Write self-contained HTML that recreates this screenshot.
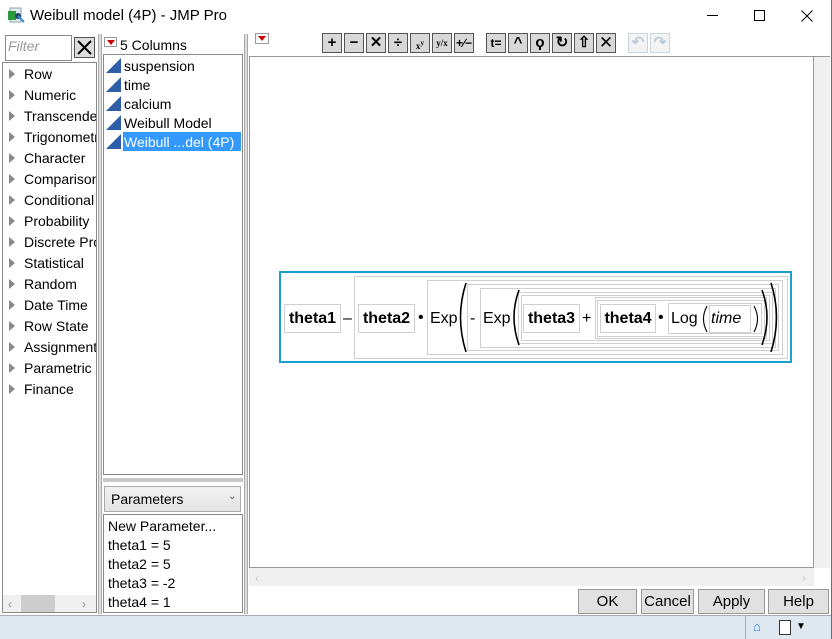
<!DOCTYPE html>
<html><head><meta charset="utf-8"><style>
*{box-sizing:border-box;margin:0;padding:0}
body{width:832px;height:639px;overflow:hidden;background:#fff;font-family:"Liberation Sans",sans-serif;font-size:14px;color:#000;position:relative}
.a{position:absolute}
.t{position:absolute;white-space:nowrap;line-height:16px}
.tri{position:absolute;width:0;height:0;border-top:5px solid transparent;border-bottom:5px solid transparent;border-left:6px solid #888}
.col{position:absolute;width:0;height:0;border-left:15px solid transparent;border-bottom:15px solid #2f5ea8}
.tb{position:absolute;top:33px;width:20px;height:20px;border:1px solid #555;background:#d8d8d8;font-weight:bold;text-align:center;line-height:18px;font-size:15px}
.box{position:absolute;border:1px solid #cfcfcf}
.fb{position:absolute;border:1px solid #cfcfcf;font-weight:bold;font-size:16px;text-align:center;line-height:27px;height:29px}
.ft{position:absolute;font-size:16px;white-space:nowrap;line-height:20px}
.btn{position:absolute;top:589px;height:25px;border:1px solid #999;background:#e1e1e1;text-align:center;line-height:23px;font-size:15px}
</style></head><body>
<div class="a" style="right:0;top:0;width:1px;height:639px;background:#1883d7"></div>
<svg class="a" style="left:7px;top:7px" width="18" height="18"><rect x="3" y="1" width="11" height="14" fill="#dfe9f2" stroke="#8aa" stroke-width="1"/><rect x="1" y="4" width="8" height="9" fill="#2e9a3a"/><circle cx="11" cy="9" r="3" fill="#246"/><path d="M11 9 L17 15" stroke="#3a8ad8" stroke-width="2"/></svg>
<div class="t" style="left:30px;top:8px;font-size:15px">Weibull model (4P) - JMP Pro</div>
<div class="a" style="left:707px;top:15px;width:11px;height:1px;background:#000"></div>
<div class="a" style="left:754px;top:10px;width:11px;height:11px;border:1px solid #000"></div>
<svg class="a" style="left:801px;top:10px" width="12" height="12"><path d="M0.5 0.5 L11.5 11.5 M11.5 0.5 L0.5 11.5" stroke="#000" stroke-width="1"/></svg>

<div class="a" style="left:5px;top:35px;width:67px;height:26px;border:1px solid #888;background:#fff"></div>
<div class="t" style="left:8px;top:38px;color:#999;font-style:italic">Filter</div>
<div class="a" style="left:74px;top:37px;width:21px;height:21px;border:1px solid #555;background:#ddd"></div>
<svg class="a" style="left:77px;top:40px" width="15" height="15"><path d="M1 1 L14 14 M14 1 L1 14" stroke="#000" stroke-width="2"/></svg>
<div class="a" style="left:2px;top:62px;width:95px;height:551px;border:1px solid #888;background:#fff"></div>
<div class="a" style="left:3px;top:595px;width:93px;height:17px;background:#f0f0f0"></div>
<div class="a" style="left:21px;top:595px;width:34px;height:17px;background:#cdcdcd"></div>
<div class="t" style="left:8px;top:596px;color:#999;font-size:12px">‹</div>
<div class="t" style="left:82px;top:596px;color:#999;font-size:12px">›</div>
<div class="a" style="left:98px;top:34px;width:4px;height:580px;border-left:1px solid #aaa;border-right:1px solid #aaa;background:#ddd"></div>

<div class="tri" style="left:9px;top:69px"></div><div class="t" style="left:24px;top:66px">Row</div>
<div class="tri" style="left:9px;top:90px"></div><div class="t" style="left:24px;top:87px">Numeric</div>
<div class="tri" style="left:9px;top:111px"></div><div class="t" style="left:24px;top:108px;width:72px;overflow:hidden">Transcendental</div>
<div class="tri" style="left:9px;top:132px"></div><div class="t" style="left:24px;top:129px;width:72px;overflow:hidden">Trigonometric</div>
<div class="tri" style="left:9px;top:153px"></div><div class="t" style="left:24px;top:150px">Character</div>
<div class="tri" style="left:9px;top:174px"></div><div class="t" style="left:24px;top:171px;width:72px;overflow:hidden">Comparison</div>
<div class="tri" style="left:9px;top:195px"></div><div class="t" style="left:24px;top:192px;width:72px;overflow:hidden">Conditional</div>
<div class="tri" style="left:9px;top:216px"></div><div class="t" style="left:24px;top:213px;width:72px;overflow:hidden">Probability</div>
<div class="tri" style="left:9px;top:237px"></div><div class="t" style="left:24px;top:234px;width:72px;overflow:hidden">Discrete Probability</div>
<div class="tri" style="left:9px;top:258px"></div><div class="t" style="left:24px;top:255px">Statistical</div>
<div class="tri" style="left:9px;top:279px"></div><div class="t" style="left:24px;top:276px">Random</div>
<div class="tri" style="left:9px;top:300px"></div><div class="t" style="left:24px;top:297px">Date Time</div>
<div class="tri" style="left:9px;top:321px"></div><div class="t" style="left:24px;top:318px">Row State</div>
<div class="tri" style="left:9px;top:342px"></div><div class="t" style="left:24px;top:339px;width:72px;overflow:hidden">Assignment</div>
<div class="tri" style="left:9px;top:363px"></div><div class="t" style="left:24px;top:360px;width:72px;overflow:hidden">Parametric</div>
<div class="tri" style="left:9px;top:384px"></div><div class="t" style="left:24px;top:381px">Finance</div>

<div class="a" style="left:104px;top:37px;width:13px;height:10px;border:1px solid #999;background:#fff"></div>
<div class="a" style="left:107px;top:40px;width:0;height:0;border-left:4px solid transparent;border-right:4px solid transparent;border-top:5px solid #c00"></div>
<div class="t" style="left:120px;top:37px">5 Columns</div>
<div class="a" style="left:103px;top:54px;width:140px;height:421px;border:1px solid #888;background:#fff"></div>
<div class="col" style="left:106px;top:58px"></div><div class="t" style="left:124px;top:58px">suspension</div>
<div class="col" style="left:106px;top:77px"></div><div class="t" style="left:124px;top:77px">time</div>
<div class="col" style="left:106px;top:96px"></div><div class="t" style="left:124px;top:96px">calcium</div>
<div class="col" style="left:106px;top:115px"></div><div class="t" style="left:124px;top:115px">Weibull Model</div>
<div class="a" style="left:123px;top:132px;width:118px;height:19px;background:#3399ff"></div>
<div class="col" style="left:106px;top:134px"></div><div class="t" style="left:124px;top:134px;color:#fff">Weibull ...del (4P)</div>
<div class="a" style="left:103px;top:478px;width:140px;height:4px;background:#c8c8c8"></div>
<div class="a" style="left:104px;top:486px;width:137px;height:26px;border:1px solid #aaa;background:linear-gradient(#f2f2f2,#e3e3e3)"></div>
<div class="t" style="left:111px;top:491px">Parameters</div>
<div class="t" style="left:228px;top:489px;font-size:10px;color:#555">⌄</div>
<div class="a" style="left:103px;top:514px;width:140px;height:99px;border:1px solid #888;background:#fff"></div>
<div class="t" style="left:108px;top:518px">New Parameter...</div>
<div class="t" style="left:108px;top:537px">theta1 = 5</div>
<div class="t" style="left:108px;top:556px">theta2 = 5</div>
<div class="t" style="left:108px;top:575px">theta3 = -2</div>
<div class="t" style="left:108px;top:594px">theta4 = 1</div>
<div class="a" style="left:244px;top:34px;width:4px;height:580px;border-left:1px solid #aaa;border-right:1px solid #aaa;background:#ddd"></div>

<div class="a" style="left:255px;top:33px;width:14px;height:11px;border:1px solid #999;background:#fff"></div>
<div class="a" style="left:258px;top:36px;width:0;height:0;border-left:4px solid transparent;border-right:4px solid transparent;border-top:5px solid #c00"></div>
<div class="tb" style="left:322px">+</div>
<div class="tb" style="left:344px">−</div>
<div class="tb" style="left:366px">✕</div>
<div class="tb" style="left:388px">÷</div>
<div class="tb" style="left:410px;font-size:9px;font-family:'Liberation Serif',serif">x<sup>y</sup></div>
<div class="tb" style="left:432px;font-size:9px;font-family:'Liberation Serif',serif">y/x</div>
<div class="tb" style="left:454px;font-size:12px">+∕−</div>
<div class="tb" style="left:486px;font-size:12px">t=</div>
<div class="tb" style="left:508px">^</div>
<div class="tb" style="left:530px">ϙ</div>
<div class="tb" style="left:552px">↻</div>
<div class="tb" style="left:574px">⇧</div>
<div class="tb" style="left:596px;font-weight:normal;font-size:17px">✕</div>
<div class="tb" style="left:628px;border-color:#c8d4e0;background:#f3f3f3;color:#bcd">↶</div>
<div class="tb" style="left:650px;border-color:#c8d4e0;background:#f3f3f3;color:#bcd">↷</div>
<div class="a" style="left:249px;top:56px;width:581px;height:1px;background:#999"></div>

<div class="a" style="left:249px;top:56px;width:565px;height:512px;border:1px solid #999;background:#fff"></div>
<div class="a" style="left:814px;top:57px;width:16px;height:511px;background:#f0f0f0"></div>
<div class="a" style="left:249px;top:568px;width:565px;height:18px;background:#f0f0f0"></div>
<div class="t" style="left:255px;top:570px;color:#ccc;font-size:12px">‹</div>
<div class="t" style="left:802px;top:570px;color:#ccc;font-size:12px">›</div>

<!-- formula -->
<div class="a" style="left:279px;top:271px;width:513px;height:92px;border:2px solid #1a9fd0"></div>
<div class="fb" style="left:284px;top:304px;width:57px">theta1</div>
<div class="ft" style="left:343px;top:309px">–</div>
<div class="box" style="left:354px;top:276px;width:434px;height:83px"></div>
<div class="fb" style="left:358px;top:304px;width:57px">theta2</div>
<div class="ft" style="left:418px;top:308px">•</div>
<div class="box" style="left:427px;top:280px;width:356px;height:75px"></div>
<div class="ft" style="left:430px;top:309px">Exp</div>
<div class="box" style="left:467px;top:284px;width:312px;height:67px"></div>
<div class="ft" style="left:470px;top:309px">-</div>
<div class="box" style="left:480px;top:288px;width:296px;height:60px"></div>
<div class="ft" style="left:483px;top:309px">Exp</div>
<div class="box" style="left:518px;top:292px;width:255px;height:52px"></div>
<div class="box" style="left:521px;top:295px;width:249px;height:46px"></div>
<div class="fb" style="left:523px;top:304px;width:57px">theta3</div>
<div class="ft" style="left:582px;top:309px">+</div>
<div class="box" style="left:595px;top:297px;width:172px;height:42px"></div>
<div class="box" style="left:597px;top:300px;width:168px;height:37px"></div>
<div class="fb" style="left:600px;top:304px;width:56px">theta4</div>
<div class="ft" style="left:658px;top:308px">•</div>
<div class="box" style="left:668px;top:303px;width:94px;height:31px"></div>
<div class="ft" style="left:671px;top:309px">Log</div>
<div class="box" style="left:709px;top:305px;width:42px;height:28px"></div>
<div class="ft" style="left:711px;top:309px;font-style:italic">time</div>
<svg class="a" style="left:0;top:0" width="832" height="639" fill="none" stroke="#000" stroke-width="1.6">
<path d="M466 283 Q455 317 466 352"/>
<path d="M519 290 Q509 317 519 345"/>
<path d="M707 306 Q700 319 707 332" stroke-width="1.1"/>
<path d="M754 306 Q761 319 754 332" stroke-width="1.1"/>
<path d="M762 290 Q772 317 762 345"/>
<path d="M771 283 Q782 317 771 352"/>
</svg>

<div class="btn" style="left:578px;width:59px">OK</div>
<div class="btn" style="left:641px;width:53px">Cancel</div>
<div class="btn" style="left:698px;width:67px">Apply</div>
<div class="btn" style="left:768px;width:61px">Help</div>

<div class="a" style="left:0;top:615px;width:831px;height:24px;background:#dfe7f1;border-top:1px solid #aab"></div>
<div class="a" style="left:745px;top:616px;width:1px;height:23px;background:#aab"></div>
<div class="t" style="left:753px;top:619px;color:#1a7ad0;font-size:13px">⌂</div>
<div class="a" style="left:779px;top:620px;width:12px;height:15px;border:1px solid #333;background:#fff"></div>
<div class="t" style="left:796px;top:619px;font-size:10px">▼</div>
</body></html>
